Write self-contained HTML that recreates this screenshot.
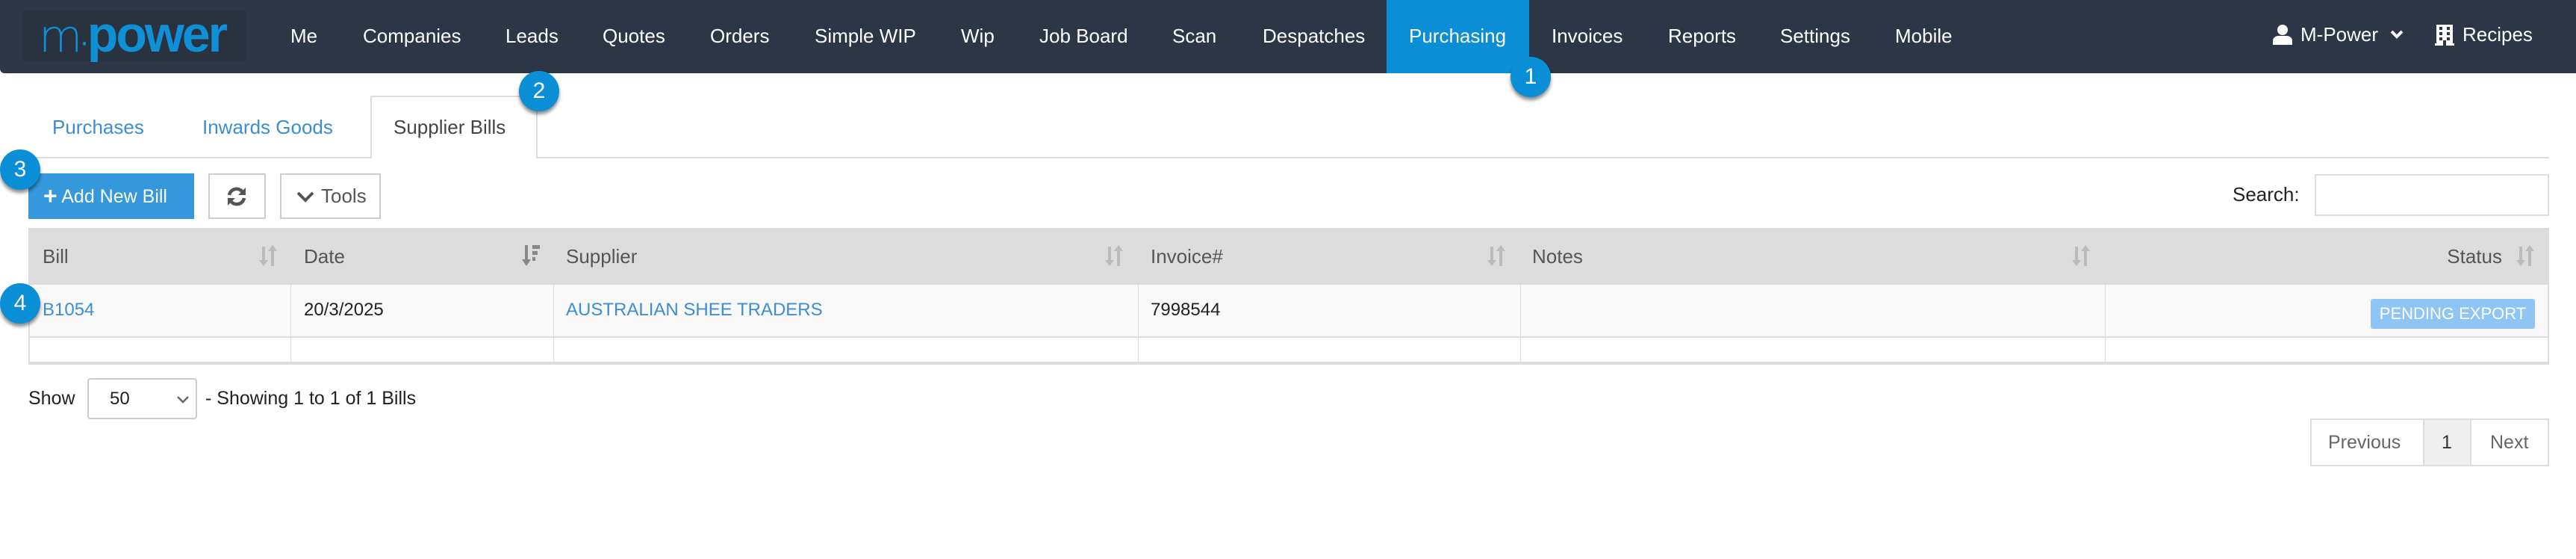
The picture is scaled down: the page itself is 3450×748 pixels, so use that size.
<!DOCTYPE html>
<html><head><meta charset="utf-8"><style>
*{margin:0;padding:0;box-sizing:border-box}
body{width:3450px;height:748px;background:#fff;font-family:"Liberation Sans",Arial,sans-serif;position:relative;overflow:hidden;color:#333}
.a{position:absolute;white-space:nowrap}
#nav{position:absolute;left:0;top:0;width:3450px;height:98px;background:#2c3646;border-bottom-left-radius:6px}
.ni{position:absolute;top:31px;font-size:26px;color:#fff;line-height:34px}
.badge{position:absolute;width:54px;height:54px;border-radius:50%;background:#0a8fd6;color:#fff;font-size:30px;line-height:54px;text-align:center;box-shadow:0 4px 5px rgba(0,0,0,.45)}
.tab{position:absolute;top:152px;font-size:26px;line-height:36px;color:#3c8dd5}
.th{position:absolute;top:326px;font-size:26px;line-height:34px;color:#555}
.td{position:absolute;top:398px;font-size:24px;line-height:34px;color:#222}
.vl{position:absolute;width:2px;background:#ddd}
.si{position:absolute;top:328px}
</style></head><body>
<div id="nav">
 <div class="a" style="left:31px;top:14px;width:298px;height:68px;background:#29323f"></div>
 <div class="a" style="left:52px;top:6px;font-size:68px;line-height:80px;color:#0f8fd6;letter-spacing:-3px"><span style="font-weight:300;font-family:'DejaVu Sans','Liberation Sans',sans-serif;font-size:60px;letter-spacing:-4px">m</span><span style="font-size:40px">·</span><b>power</b></div>
 <div class="a" style="left:1857px;top:0;width:191px;height:98px;background:#0a8fd6"></div>
 <div class="ni" style="left:389px">Me</div>
 <div class="ni" style="left:486px">Companies</div>
 <div class="ni" style="left:677px">Leads</div>
 <div class="ni" style="left:807px">Quotes</div>
 <div class="ni" style="left:951px">Orders</div>
 <div class="ni" style="left:1091px">Simple WIP</div>
 <div class="ni" style="left:1287px">Wip</div>
 <div class="ni" style="left:1392px">Job Board</div>
 <div class="ni" style="left:1570px">Scan</div>
 <div class="ni" style="left:1691px">Despatches</div>
 <div class="ni" style="left:1887px">Purchasing</div>
 <div class="ni" style="left:2078px">Invoices</div>
 <div class="ni" style="left:2234px">Reports</div>
 <div class="ni" style="left:2384px">Settings</div>
 <div class="ni" style="left:2538px">Mobile</div>
 <svg class="a" style="left:3044px;top:33px" width="26" height="27" viewBox="0 0 26 27"><circle cx="13" cy="7" r="7" fill="#fff"/><path d="M0 27V22C0 17 4 15 8 15H18C22 15 26 17 26 22V27Z" fill="#fff"/></svg>
 <div class="ni" style="left:3081px;top:29px">M-Power</div>
 <svg class="a" style="left:3201px;top:40px" width="18" height="12" viewBox="0 0 18 12"><path d="M2 2L9 9L16 2" stroke="#fff" stroke-width="4" fill="none"/></svg>
 <svg class="a" style="left:3261px;top:33px" width="26" height="28" viewBox="0 0 26 28"><path d="M2 0H24V25H26V28H0V25H2Z" fill="#fff"/><g fill="#2c3646"><rect x="6" y="3" width="4" height="4"/><rect x="16" y="3" width="4" height="4"/><rect x="6" y="10" width="4" height="4"/><rect x="16" y="10" width="4" height="4"/><rect x="6" y="17" width="4" height="4"/><rect x="16" y="17" width="4" height="4"/><rect x="11" y="21" width="4" height="7"/></g></svg>
 <div class="ni" style="left:3298px;top:29px">Recipes</div>
</div>
<div class="a" style="left:38px;top:210px;width:3376px;height:2px;background:#ddd"></div>
<div class="a" style="left:496px;top:128px;width:224px;height:84px;background:#fff;border:2px solid #ddd;border-bottom:none"></div>
<div class="tab" style="left:70px">Purchases</div>
<div class="tab" style="left:271px">Inwards Goods</div>
<div class="tab" style="left:527px;color:#444">Supplier Bills</div>
<div class="a" style="left:38px;top:232px;width:222px;height:61px;background:#3598dc;color:#fff;font-size:25px;line-height:61px;padding-left:20px"><b style="font-size:32px;vertical-align:-2px">+</b> Add New Bill</div>
<div class="a" style="left:279px;top:232px;width:77px;height:61px;border:2px solid #ccc"></div>
<svg class="a" style="left:303px;top:249px" width="28" height="28" viewBox="0 0 28 28"><path d="M4 12A10 10 0 0 1 22 8" stroke="#555" stroke-width="4.5" fill="none"/><path d="M26 2V12H16Z" fill="#555"/><path d="M24 16A10 10 0 0 1 6 20" stroke="#555" stroke-width="4.5" fill="none"/><path d="M2 26V16H12Z" fill="#555"/></svg>
<div class="a" style="left:375px;top:232px;width:135px;height:61px;border:2px solid #ccc"></div>
<svg class="a" style="left:396px;top:255px" width="26" height="16" viewBox="0 0 26 16"><path d="M3 3L13 13L23 3" stroke="#555" stroke-width="4" fill="none"/></svg>
<div class="a" style="left:430px;top:245px;font-size:26px;line-height:34px;color:#555">Tools</div>
<div class="a" style="left:2990px;top:243px;font-size:26px;line-height:34px;color:#222">Search:</div>
<div class="a" style="left:3100px;top:233px;width:314px;height:56px;border:2px solid #ddd"></div>
<div class="a" style="left:38px;top:305px;width:3376px;height:76px;background:#dcdcdc"></div>
<div class="a" style="left:38px;top:381px;width:3376px;height:70px;background:#f9f9f9"></div>
<div class="a" style="left:38px;top:450px;width:3376px;height:2px;background:#ddd"></div>
<div class="a" style="left:38px;top:484px;width:3376px;height:4px;background:#ddd"></div>
<div class="vl" style="left:38px;top:381px;height:105px"></div>
<div class="vl" style="left:3412px;top:381px;height:105px"></div>
<div class="vl" style="left:389px;top:381px;height:105px;width:1px"></div>
<div class="vl" style="left:741px;top:381px;height:105px;width:1px"></div>
<div class="vl" style="left:1524px;top:381px;height:105px;width:1px"></div>
<div class="vl" style="left:2036px;top:381px;height:105px;width:1px"></div>
<div class="vl" style="left:2819px;top:381px;height:105px;width:1px"></div>
<div class="th" style="left:57px">Bill</div>
<div class="th" style="left:407px">Date</div>
<div class="th" style="left:758px">Supplier</div>
<div class="th" style="left:1541px">Invoice#</div>
<div class="th" style="left:2052px">Notes</div>
<div class="th" style="left:3261px;width:90px;text-align:right">Status</div>
<svg class="si" style="left:345px" width="28" height="28" viewBox="0 0 28 28"><g fill="#bbb"><rect x="6" y="2" width="4" height="20"/><path d="M2 20H14L8 28Z"/><rect x="18" y="6" width="4" height="22"/><path d="M14 8H26L20 0Z"/></g></svg>
<svg class="si" style="left:697px" width="28" height="28" viewBox="0 0 28 28"><g fill="#888"><rect x="6" y="0" width="4" height="20"/><path d="M2 19H14L8 28Z"/><rect x="16" y="0" width="10" height="5"/><rect x="16" y="8" width="7" height="5"/><rect x="16" y="16" width="4" height="5"/></g></svg>
<svg class="si" style="left:1478px" width="28" height="28" viewBox="0 0 28 28"><g fill="#bbb"><rect x="6" y="2" width="4" height="20"/><path d="M2 20H14L8 28Z"/><rect x="18" y="6" width="4" height="22"/><path d="M14 8H26L20 0Z"/></g></svg>
<svg class="si" style="left:1990px" width="28" height="28" viewBox="0 0 28 28"><g fill="#bbb"><rect x="6" y="2" width="4" height="20"/><path d="M2 20H14L8 28Z"/><rect x="18" y="6" width="4" height="22"/><path d="M14 8H26L20 0Z"/></g></svg>
<svg class="si" style="left:2773px" width="28" height="28" viewBox="0 0 28 28"><g fill="#bbb"><rect x="6" y="2" width="4" height="20"/><path d="M2 20H14L8 28Z"/><rect x="18" y="6" width="4" height="22"/><path d="M14 8H26L20 0Z"/></g></svg>
<svg class="si" style="left:3368px" width="28" height="28" viewBox="0 0 28 28"><g fill="#bbb"><rect x="6" y="2" width="4" height="20"/><path d="M2 20H14L8 28Z"/><rect x="18" y="6" width="4" height="22"/><path d="M14 8H26L20 0Z"/></g></svg>
<div class="td" style="left:57px;color:#3c8dd5">B1054</div>
<div class="td" style="left:407px">20/3/2025</div>
<div class="td" style="left:758px;color:#3c8dd5">AUSTRALIAN SHEE TRADERS</div>
<div class="td" style="left:1541px">7998544</div>
<div class="a" style="left:3175px;top:400px;width:220px;height:40px;background:#8ec5f5;border-radius:3px;color:#fff;font-size:22px;line-height:40px;text-align:center">PENDING EXPORT</div>
<div class="a" style="left:38px;top:516px;font-size:25px;line-height:34px;color:#222">Show</div>
<div class="a" style="left:117px;top:506px;width:147px;height:55px;border:2px solid #ccc;border-radius:4px;font-size:24px;line-height:51px;padding-left:28px;color:#222">50</div>
<svg class="a" style="left:236px;top:529px" width="18" height="11" viewBox="0 0 18 11"><path d="M2 2L9 9L16 2" stroke="#666" stroke-width="2.5" fill="none"/></svg>
<div class="a" style="left:275px;top:516px;font-size:25px;line-height:34px;color:#222">- Showing 1 to 1 of 1 Bills</div>
<div class="a" style="left:3094px;top:560px;width:320px;height:64px;border:2px solid #ddd"></div>
<div class="a" style="left:3245px;top:562px;width:65px;height:60px;background:#eee;border-left:2px solid #ddd;border-right:2px solid #ddd"></div>
<div class="a" style="left:3118px;top:575px;font-size:25px;line-height:34px;color:#666">Previous</div>
<div class="a" style="left:3270px;top:575px;font-size:25px;line-height:34px;color:#333">1</div>
<div class="a" style="left:3335px;top:575px;font-size:25px;line-height:34px;color:#666">Next</div>
<div class="badge" style="left:2023px;top:76px">1</div>
<div class="badge" style="left:695px;top:95px">2</div>
<div class="badge" style="left:0;top:200px">3</div>
<div class="badge" style="left:0;top:379px">4</div>
</body></html>
